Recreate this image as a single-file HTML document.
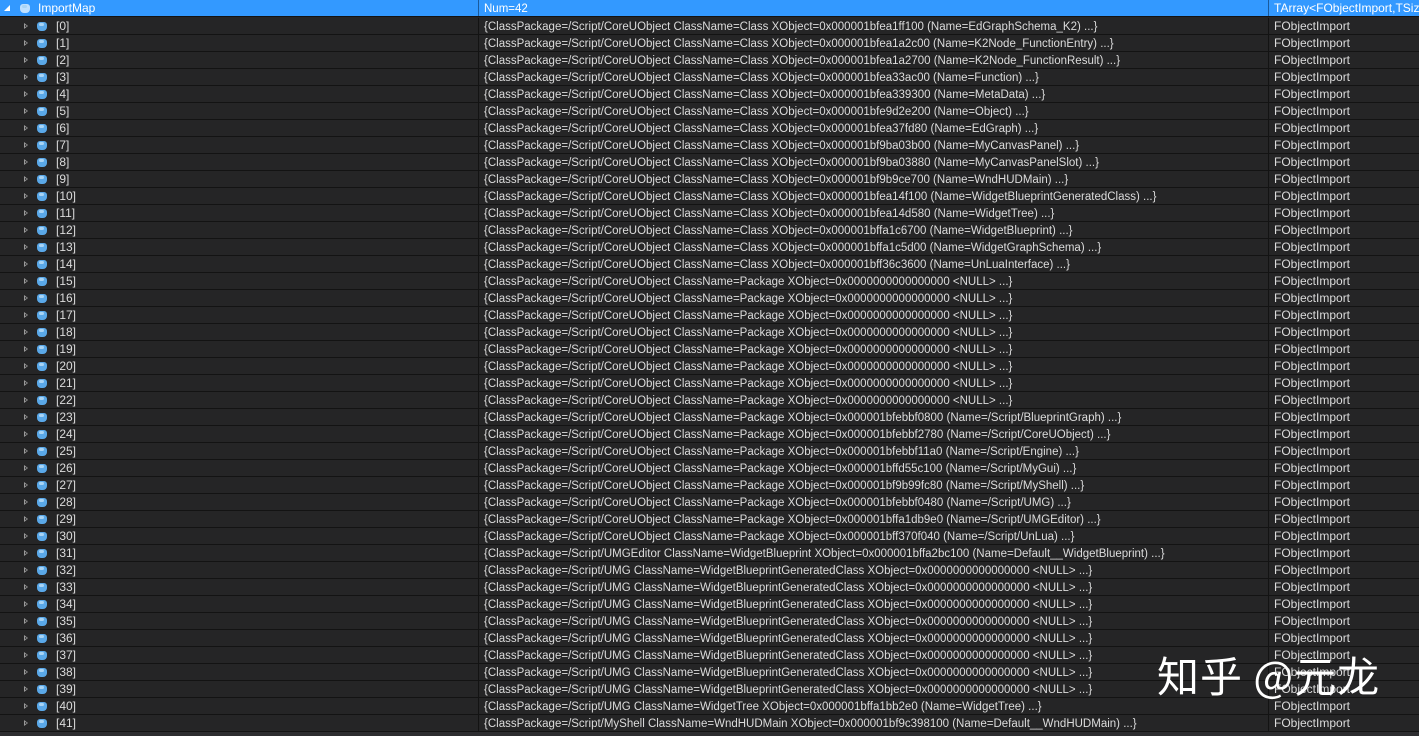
<!DOCTYPE html>
<html><head><meta charset="utf-8">
<style>
*{margin:0;padding:0;box-sizing:border-box}
body{width:1419px;height:736px;overflow:hidden;background:#252526;font-family:"Liberation Sans",sans-serif;font-size:11.5px;color:#dcdcdc;position:relative}
.r{position:absolute;left:0;width:1419px;height:17px;border-bottom:1px solid #131313;background:#252526;white-space:nowrap}
.r div{position:absolute;top:0;height:16px;line-height:17px;overflow:hidden}
.a{left:0;width:478px}
.r .b{left:478px;width:790px;border-left:1px solid #131313;padding-left:5px;line-height:18px}
.c{left:1268px;width:151px;border-left:1px solid #131313;padding-left:5px;font-size:12px}
.tri{position:absolute;left:24px;top:5px;width:0;height:0;border-left:4px solid #9a9a9a;border-top:3.5px solid transparent;border-bottom:3.5px solid transparent}
.tri::after{content:"";position:absolute;left:-3px;top:-1.5px;width:0;height:0;border-left:2px solid #252526;border-top:1.5px solid transparent;border-bottom:1.5px solid transparent}
.ic{position:absolute;left:37px;top:4px;width:10px;height:9px;background:#5aa8e8;border-radius:3px 3px 4px 4px}
.ic::after{content:"";position:absolute;left:2px;top:1px;width:5px;height:3px;background:#a9d4f5;border-radius:2px}
.n{position:absolute;left:56px;top:0;font-size:12px}
.h{top:0;background:#3399ff;color:#fff;border-bottom:1px solid #131313}
.h .b,.h .c{border-left:1px solid #1a5a9c}
.tabs{position:absolute;left:0;top:732px;width:1419px;height:4px;background:#2d2d30}
.wm{position:absolute;left:1157px;top:646px;font-family:"Noto Sans CJK SC","WenQuanYi Zen Hei",sans-serif;font-size:42px;color:#fff;letter-spacing:1px;white-space:nowrap;line-height:58px}
</style></head><body>
<div class="r h"><div class="a"><span style="position:absolute;left:4px;top:5px;width:0;height:0;border-right:6px solid #fff;border-top:6px solid transparent"></span><span class="ic" style="left:20px;background:#bfe0ff"></span><span class="n" style="left:38px">ImportMap</span></div><div class="b">Num=42</div><div class="c">TArray&lt;FObjectImport,TSizedDefaultAllocator&lt;32&gt;&gt;</div></div>
<div class="r" style="top:18px"><div class="a"><i class="tri"></i><i class="ic"></i><span class="n">[0]</span></div><div class="b">{ClassPackage=/Script/CoreUObject ClassName=Class XObject=0x000001bfea1ff100 (Name=EdGraphSchema_K2) ...}</div><div class="c">FObjectImport</div></div>
<div class="r" style="top:35px"><div class="a"><i class="tri"></i><i class="ic"></i><span class="n">[1]</span></div><div class="b">{ClassPackage=/Script/CoreUObject ClassName=Class XObject=0x000001bfea1a2c00 (Name=K2Node_FunctionEntry) ...}</div><div class="c">FObjectImport</div></div>
<div class="r" style="top:52px"><div class="a"><i class="tri"></i><i class="ic"></i><span class="n">[2]</span></div><div class="b">{ClassPackage=/Script/CoreUObject ClassName=Class XObject=0x000001bfea1a2700 (Name=K2Node_FunctionResult) ...}</div><div class="c">FObjectImport</div></div>
<div class="r" style="top:69px"><div class="a"><i class="tri"></i><i class="ic"></i><span class="n">[3]</span></div><div class="b">{ClassPackage=/Script/CoreUObject ClassName=Class XObject=0x000001bfea33ac00 (Name=Function) ...}</div><div class="c">FObjectImport</div></div>
<div class="r" style="top:86px"><div class="a"><i class="tri"></i><i class="ic"></i><span class="n">[4]</span></div><div class="b">{ClassPackage=/Script/CoreUObject ClassName=Class XObject=0x000001bfea339300 (Name=MetaData) ...}</div><div class="c">FObjectImport</div></div>
<div class="r" style="top:103px"><div class="a"><i class="tri"></i><i class="ic"></i><span class="n">[5]</span></div><div class="b">{ClassPackage=/Script/CoreUObject ClassName=Class XObject=0x000001bfe9d2e200 (Name=Object) ...}</div><div class="c">FObjectImport</div></div>
<div class="r" style="top:120px"><div class="a"><i class="tri"></i><i class="ic"></i><span class="n">[6]</span></div><div class="b">{ClassPackage=/Script/CoreUObject ClassName=Class XObject=0x000001bfea37fd80 (Name=EdGraph) ...}</div><div class="c">FObjectImport</div></div>
<div class="r" style="top:137px"><div class="a"><i class="tri"></i><i class="ic"></i><span class="n">[7]</span></div><div class="b">{ClassPackage=/Script/CoreUObject ClassName=Class XObject=0x000001bf9ba03b00 (Name=MyCanvasPanel) ...}</div><div class="c">FObjectImport</div></div>
<div class="r" style="top:154px"><div class="a"><i class="tri"></i><i class="ic"></i><span class="n">[8]</span></div><div class="b">{ClassPackage=/Script/CoreUObject ClassName=Class XObject=0x000001bf9ba03880 (Name=MyCanvasPanelSlot) ...}</div><div class="c">FObjectImport</div></div>
<div class="r" style="top:171px"><div class="a"><i class="tri"></i><i class="ic"></i><span class="n">[9]</span></div><div class="b">{ClassPackage=/Script/CoreUObject ClassName=Class XObject=0x000001bf9b9ce700 (Name=WndHUDMain) ...}</div><div class="c">FObjectImport</div></div>
<div class="r" style="top:188px"><div class="a"><i class="tri"></i><i class="ic"></i><span class="n">[10]</span></div><div class="b">{ClassPackage=/Script/CoreUObject ClassName=Class XObject=0x000001bfea14f100 (Name=WidgetBlueprintGeneratedClass) ...}</div><div class="c">FObjectImport</div></div>
<div class="r" style="top:205px"><div class="a"><i class="tri"></i><i class="ic"></i><span class="n">[11]</span></div><div class="b">{ClassPackage=/Script/CoreUObject ClassName=Class XObject=0x000001bfea14d580 (Name=WidgetTree) ...}</div><div class="c">FObjectImport</div></div>
<div class="r" style="top:222px"><div class="a"><i class="tri"></i><i class="ic"></i><span class="n">[12]</span></div><div class="b">{ClassPackage=/Script/CoreUObject ClassName=Class XObject=0x000001bffa1c6700 (Name=WidgetBlueprint) ...}</div><div class="c">FObjectImport</div></div>
<div class="r" style="top:239px"><div class="a"><i class="tri"></i><i class="ic"></i><span class="n">[13]</span></div><div class="b">{ClassPackage=/Script/CoreUObject ClassName=Class XObject=0x000001bffa1c5d00 (Name=WidgetGraphSchema) ...}</div><div class="c">FObjectImport</div></div>
<div class="r" style="top:256px"><div class="a"><i class="tri"></i><i class="ic"></i><span class="n">[14]</span></div><div class="b">{ClassPackage=/Script/CoreUObject ClassName=Class XObject=0x000001bff36c3600 (Name=UnLuaInterface) ...}</div><div class="c">FObjectImport</div></div>
<div class="r" style="top:273px"><div class="a"><i class="tri"></i><i class="ic"></i><span class="n">[15]</span></div><div class="b">{ClassPackage=/Script/CoreUObject ClassName=Package XObject=0x0000000000000000 &lt;NULL&gt; ...}</div><div class="c">FObjectImport</div></div>
<div class="r" style="top:290px"><div class="a"><i class="tri"></i><i class="ic"></i><span class="n">[16]</span></div><div class="b">{ClassPackage=/Script/CoreUObject ClassName=Package XObject=0x0000000000000000 &lt;NULL&gt; ...}</div><div class="c">FObjectImport</div></div>
<div class="r" style="top:307px"><div class="a"><i class="tri"></i><i class="ic"></i><span class="n">[17]</span></div><div class="b">{ClassPackage=/Script/CoreUObject ClassName=Package XObject=0x0000000000000000 &lt;NULL&gt; ...}</div><div class="c">FObjectImport</div></div>
<div class="r" style="top:324px"><div class="a"><i class="tri"></i><i class="ic"></i><span class="n">[18]</span></div><div class="b">{ClassPackage=/Script/CoreUObject ClassName=Package XObject=0x0000000000000000 &lt;NULL&gt; ...}</div><div class="c">FObjectImport</div></div>
<div class="r" style="top:341px"><div class="a"><i class="tri"></i><i class="ic"></i><span class="n">[19]</span></div><div class="b">{ClassPackage=/Script/CoreUObject ClassName=Package XObject=0x0000000000000000 &lt;NULL&gt; ...}</div><div class="c">FObjectImport</div></div>
<div class="r" style="top:358px"><div class="a"><i class="tri"></i><i class="ic"></i><span class="n">[20]</span></div><div class="b">{ClassPackage=/Script/CoreUObject ClassName=Package XObject=0x0000000000000000 &lt;NULL&gt; ...}</div><div class="c">FObjectImport</div></div>
<div class="r" style="top:375px"><div class="a"><i class="tri"></i><i class="ic"></i><span class="n">[21]</span></div><div class="b">{ClassPackage=/Script/CoreUObject ClassName=Package XObject=0x0000000000000000 &lt;NULL&gt; ...}</div><div class="c">FObjectImport</div></div>
<div class="r" style="top:392px"><div class="a"><i class="tri"></i><i class="ic"></i><span class="n">[22]</span></div><div class="b">{ClassPackage=/Script/CoreUObject ClassName=Package XObject=0x0000000000000000 &lt;NULL&gt; ...}</div><div class="c">FObjectImport</div></div>
<div class="r" style="top:409px"><div class="a"><i class="tri"></i><i class="ic"></i><span class="n">[23]</span></div><div class="b">{ClassPackage=/Script/CoreUObject ClassName=Package XObject=0x000001bfebbf0800 (Name=/Script/BlueprintGraph) ...}</div><div class="c">FObjectImport</div></div>
<div class="r" style="top:426px"><div class="a"><i class="tri"></i><i class="ic"></i><span class="n">[24]</span></div><div class="b">{ClassPackage=/Script/CoreUObject ClassName=Package XObject=0x000001bfebbf2780 (Name=/Script/CoreUObject) ...}</div><div class="c">FObjectImport</div></div>
<div class="r" style="top:443px"><div class="a"><i class="tri"></i><i class="ic"></i><span class="n">[25]</span></div><div class="b">{ClassPackage=/Script/CoreUObject ClassName=Package XObject=0x000001bfebbf11a0 (Name=/Script/Engine) ...}</div><div class="c">FObjectImport</div></div>
<div class="r" style="top:460px"><div class="a"><i class="tri"></i><i class="ic"></i><span class="n">[26]</span></div><div class="b">{ClassPackage=/Script/CoreUObject ClassName=Package XObject=0x000001bffd55c100 (Name=/Script/MyGui) ...}</div><div class="c">FObjectImport</div></div>
<div class="r" style="top:477px"><div class="a"><i class="tri"></i><i class="ic"></i><span class="n">[27]</span></div><div class="b">{ClassPackage=/Script/CoreUObject ClassName=Package XObject=0x000001bf9b99fc80 (Name=/Script/MyShell) ...}</div><div class="c">FObjectImport</div></div>
<div class="r" style="top:494px"><div class="a"><i class="tri"></i><i class="ic"></i><span class="n">[28]</span></div><div class="b">{ClassPackage=/Script/CoreUObject ClassName=Package XObject=0x000001bfebbf0480 (Name=/Script/UMG) ...}</div><div class="c">FObjectImport</div></div>
<div class="r" style="top:511px"><div class="a"><i class="tri"></i><i class="ic"></i><span class="n">[29]</span></div><div class="b">{ClassPackage=/Script/CoreUObject ClassName=Package XObject=0x000001bffa1db9e0 (Name=/Script/UMGEditor) ...}</div><div class="c">FObjectImport</div></div>
<div class="r" style="top:528px"><div class="a"><i class="tri"></i><i class="ic"></i><span class="n">[30]</span></div><div class="b">{ClassPackage=/Script/CoreUObject ClassName=Package XObject=0x000001bff370f040 (Name=/Script/UnLua) ...}</div><div class="c">FObjectImport</div></div>
<div class="r" style="top:545px"><div class="a"><i class="tri"></i><i class="ic"></i><span class="n">[31]</span></div><div class="b">{ClassPackage=/Script/UMGEditor ClassName=WidgetBlueprint XObject=0x000001bffa2bc100 (Name=Default__WidgetBlueprint) ...}</div><div class="c">FObjectImport</div></div>
<div class="r" style="top:562px"><div class="a"><i class="tri"></i><i class="ic"></i><span class="n">[32]</span></div><div class="b">{ClassPackage=/Script/UMG ClassName=WidgetBlueprintGeneratedClass XObject=0x0000000000000000 &lt;NULL&gt; ...}</div><div class="c">FObjectImport</div></div>
<div class="r" style="top:579px"><div class="a"><i class="tri"></i><i class="ic"></i><span class="n">[33]</span></div><div class="b">{ClassPackage=/Script/UMG ClassName=WidgetBlueprintGeneratedClass XObject=0x0000000000000000 &lt;NULL&gt; ...}</div><div class="c">FObjectImport</div></div>
<div class="r" style="top:596px"><div class="a"><i class="tri"></i><i class="ic"></i><span class="n">[34]</span></div><div class="b">{ClassPackage=/Script/UMG ClassName=WidgetBlueprintGeneratedClass XObject=0x0000000000000000 &lt;NULL&gt; ...}</div><div class="c">FObjectImport</div></div>
<div class="r" style="top:613px"><div class="a"><i class="tri"></i><i class="ic"></i><span class="n">[35]</span></div><div class="b">{ClassPackage=/Script/UMG ClassName=WidgetBlueprintGeneratedClass XObject=0x0000000000000000 &lt;NULL&gt; ...}</div><div class="c">FObjectImport</div></div>
<div class="r" style="top:630px"><div class="a"><i class="tri"></i><i class="ic"></i><span class="n">[36]</span></div><div class="b">{ClassPackage=/Script/UMG ClassName=WidgetBlueprintGeneratedClass XObject=0x0000000000000000 &lt;NULL&gt; ...}</div><div class="c">FObjectImport</div></div>
<div class="r" style="top:647px"><div class="a"><i class="tri"></i><i class="ic"></i><span class="n">[37]</span></div><div class="b">{ClassPackage=/Script/UMG ClassName=WidgetBlueprintGeneratedClass XObject=0x0000000000000000 &lt;NULL&gt; ...}</div><div class="c">FObjectImport</div></div>
<div class="r" style="top:664px"><div class="a"><i class="tri"></i><i class="ic"></i><span class="n">[38]</span></div><div class="b">{ClassPackage=/Script/UMG ClassName=WidgetBlueprintGeneratedClass XObject=0x0000000000000000 &lt;NULL&gt; ...}</div><div class="c">FObjectImport</div></div>
<div class="r" style="top:681px"><div class="a"><i class="tri"></i><i class="ic"></i><span class="n">[39]</span></div><div class="b">{ClassPackage=/Script/UMG ClassName=WidgetBlueprintGeneratedClass XObject=0x0000000000000000 &lt;NULL&gt; ...}</div><div class="c">FObjectImport</div></div>
<div class="r" style="top:698px"><div class="a"><i class="tri"></i><i class="ic"></i><span class="n">[40]</span></div><div class="b">{ClassPackage=/Script/UMG ClassName=WidgetTree XObject=0x000001bffa1bb2e0 (Name=WidgetTree) ...}</div><div class="c">FObjectImport</div></div>
<div class="r" style="top:715px"><div class="a"><i class="tri"></i><i class="ic"></i><span class="n">[41]</span></div><div class="b">{ClassPackage=/Script/MyShell ClassName=WndHUDMain XObject=0x000001bf9c398100 (Name=Default__WndHUDMain) ...}</div><div class="c">FObjectImport</div></div>
<div class="tabs"></div>
<div class="wm">知乎 @元龙</div>
</body></html>
